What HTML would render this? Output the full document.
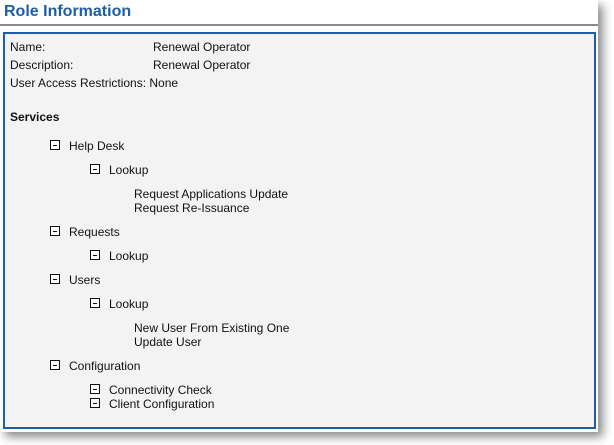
<!DOCTYPE html>
<html><head><style>
html,body{margin:0;padding:0;width:614px;height:445px;background:#fff;overflow:hidden}
.panel{position:absolute;left:0;top:0;width:598px;height:432px;background:#fff;box-shadow:5px 5px 9px rgba(0,0,0,.45)}
.title{position:absolute;left:4px;top:3px;font:bold 16px "Liberation Sans",sans-serif;color:#1d5ea8}
.rule{position:absolute;left:0;top:24px;width:598px;height:2px;background:#8a8a8a}
.box{position:absolute;left:3px;top:32px;width:589px;height:393px;border:2px solid #1d5ea8;background:#f3f3f3}
.t{position:absolute;font:12px "Liberation Sans",sans-serif;color:#111;line-height:14px;white-space:nowrap}
.b{font-weight:bold}
.i{position:absolute;border:1px solid #111;background:#fff;box-sizing:border-box;width:10px;height:10px}
.i:after{content:"";position:absolute;left:2px;top:3.5px;width:4px;height:1px;background:#111}
</style></head><body>
<div class="panel">
<div class="title">Role Information</div>
<div class="rule"></div>
<div class="box"></div>
<div class="t" style="left:10px;top:40px">Name:</div>
<div class="t" style="left:153px;top:40px">Renewal Operator</div>
<div class="t" style="left:10px;top:58px">Description:</div>
<div class="t" style="left:153px;top:58px">Renewal Operator</div>
<div class="t" style="left:10px;top:76px">User Access Restrictions: None</div>
<div class="t b" style="left:10px;top:110px">Services</div>

<div class="i" style="left:50px;top:140px"></div><div class="t" style="left:69px;top:139px">Help Desk</div>
<div class="i" style="left:90px;top:164px"></div><div class="t" style="left:109px;top:163px">Lookup</div>
<div class="t" style="left:134px;top:187px">Request Applications Update</div>
<div class="t" style="left:134px;top:201px">Request Re-Issuance</div>
<div class="i" style="left:50px;top:226px"></div><div class="t" style="left:69px;top:225px">Requests</div>
<div class="i" style="left:90px;top:250px"></div><div class="t" style="left:109px;top:249px">Lookup</div>
<div class="i" style="left:50px;top:274px"></div><div class="t" style="left:69px;top:273px">Users</div>
<div class="i" style="left:90px;top:298px"></div><div class="t" style="left:109px;top:297px">Lookup</div>
<div class="t" style="left:134px;top:321px">New User From Existing One</div>
<div class="t" style="left:134px;top:335px">Update User</div>
<div class="i" style="left:50px;top:360px"></div><div class="t" style="left:69px;top:359px">Configuration</div>
<div class="i" style="left:90px;top:384px"></div><div class="t" style="left:109px;top:383px">Connectivity Check</div>
<div class="i" style="left:90px;top:398px"></div><div class="t" style="left:109px;top:397px">Client Configuration</div>
</div>
</body></html>
